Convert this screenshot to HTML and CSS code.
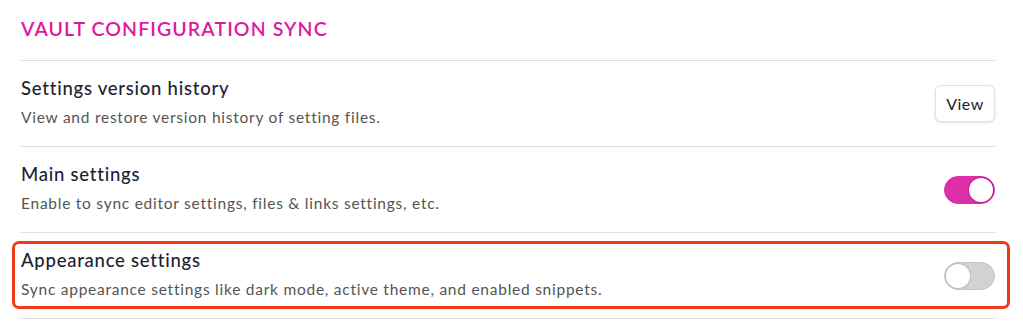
FILE: index.html
```html
<!DOCTYPE html>
<html>
<head>
    <meta charset="UTF-8">
    <title>Vault configuration sync</title>
    <link rel="stylesheet" href="styles.css">
</head>
<body>
    <section class="settings">
        <h2 class="settings-heading">Vault configuration sync</h2>

        <div class="setting-item">
            <div class="setting-info">
                <div class="setting-name">Settings version history</div>
                <div class="setting-desc">View and restore version history of setting files.</div>
            </div>
            <button class="setting-button">View</button>
        </div>

        <div class="setting-item">
            <div class="setting-info">
                <div class="setting-name">Main settings</div>
                <div class="setting-desc">Enable to sync editor settings, files &amp; links settings, etc.</div>
            </div>
            <div class="toggle is-enabled"></div>
        </div>

        <div class="setting-item is-highlighted">
            <div class="setting-info">
                <div class="setting-name">Appearance settings</div>
                <div class="setting-desc">Sync appearance settings like dark mode, active theme, and enabled snippets.</div>
            </div>
            <div class="toggle"></div>
        </div>
        <div class="settings-end"></div>
    </section>
</body>
</html>
```

FILE: styles.css
```css
:root {
    --accent: #dc1a9e;
    --line: #dedede;
}

body {
    margin: 0;
    background: #fff;
    font-family: Lato, "Noto Sans", sans-serif;
    color: #1c2233;
}

.settings {
    width: 974px;
    padding: 0 0 0 21px;
}

.settings-heading {
    margin: 0;
    height: 60px;
    box-sizing: border-box;
    padding-top: 17px;
    font-size: 19.5px;
    font-weight: 600;
    letter-spacing: 1.1px;
    line-height: 24px;
    text-transform: uppercase;
    color: var(--accent);
}

.setting-item {
    position: relative;
    height: 86px;
    box-sizing: border-box;
    border-top: 1px solid var(--line);
    display: flex;
    align-items: center;
    justify-content: space-between;
}

.setting-info {
    display: flex;
    flex-direction: column;
    gap: 8px;
    margin-bottom: 4px;
}

.setting-name {
    font-size: 18.5px;
    line-height: 22px;
    font-weight: 500;
    letter-spacing: 0.75px;
}

.setting-desc {
    font-size: 15.5px;
    line-height: 20px;
    color: #555;
    letter-spacing: 0.75px;
}

.setting-button {
    font: inherit;
    font-size: 16px;
    letter-spacing: 0.5px;
    color: #1c2233;
    background: #fff;
    border: 1px solid #e2e2e2;
    border-radius: 6px;
    box-shadow: 0 1px 3px rgba(0, 0, 0, 0.12);
    width: 60px;
    height: 37px;
    padding: 0;
}

.toggle {
    position: relative;
    width: 51px;
    height: 28px;
    box-sizing: border-box;
    border-radius: 14px;
    background: #d2d2d2;
    border: 1px solid #c4c4c4;
}

.toggle::after {
    content: "";
    position: absolute;
    top: 1px;
    left: 1px;
    width: 24px;
    height: 24px;
    border-radius: 50%;
    background: #fff;
    box-shadow: 0 0 0 1px #bcbcbc;
}

.toggle.is-enabled {
    background: #dc2fa6;
    border-color: #dc2fa6;
}

.toggle.is-enabled::after {
    left: auto;
    right: 1px;
    box-shadow: 0 0 0 1px #c01e8e;
}

.is-highlighted::after {
    content: "";
    position: absolute;
    left: -9px;
    right: -15px;
    top: 8px;
    bottom: 9px;
    border: 3px solid #f03a17;
    border-radius: 7px;
    pointer-events: none;
}

.settings-end {
    border-top: 1px solid var(--line);
}
```
